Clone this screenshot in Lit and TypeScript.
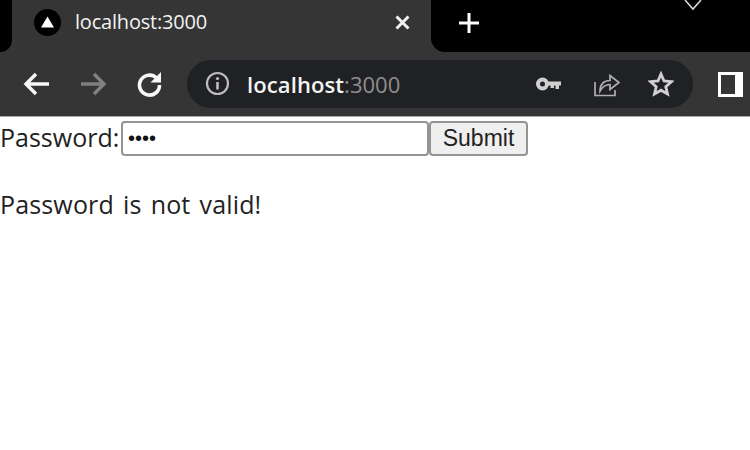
import { LitElement, html, css } from "lit";
import { customElement } from "lit/decorators.js";

@customElement("app-root")
export class AppRoot extends LitElement {
  static styles = css`
    :host { display: block; width: 750px; height: 450px; overflow: hidden; background: #fff; font-family: "Open Sans", "Noto Sans", sans-serif; }
    svg { display: block; flex: none; }
    .strip { display: flex; height: 52px; background: #353535; }
    .corner { width: 12px; background: #000; border-bottom-right-radius: 12px; }
    .tab { width: 419px; display: flex; align-items: center; padding: 0 20px 8px 22px; box-sizing: border-box; color: #f2f2f2; }
    .tab-title { flex: 1; margin-left: 14px; font-size: 20px; letter-spacing: -0.2px; line-height: 44px; }
    .rest { flex: 1; background: #000; border-bottom-left-radius: 14px; display: flex; justify-content: space-between; padding: 0 47px 0 27px; }
    .new { margin-top: 12px; }
    .toolbar { height: 64px; background: #353535; display: flex; align-items: center; border-bottom: 1px solid #a9a9a9; }
    .nav { display: flex; align-items: center; gap: 28px; padding-left: 23px; width: 187px; box-sizing: border-box; }
    .omni { width: 506px; height: 48px; border-radius: 24px; background: #202124; display: flex; align-items: center; padding-left: 18px; box-sizing: border-box; margin-top: -1px; }
    .url { margin-left: 17px; flex: 1; font-size: 22px; letter-spacing: 0.1px; color: #f4f4f4; font-weight: 600; }
    .url span { color: #8f8f8f; font-weight: 400; letter-spacing: 0; }
    .omni-icons { display: flex; align-items: center; gap: 28px; padding-right: 19px; }
    .key { margin-right: 3px; }
    .panel { margin-left: 25px; }
    .page { color: #222; font-size: 25px; }
    form { display: flex; align-items: stretch; height: 35px; margin-top: 4px; line-height: 35px; }
    label { width: 121px; white-space: nowrap; margin-top: -1px; }
    input { width: 308px; height: 35px; box-sizing: border-box; border: 2px solid #949494; border-radius: 4px; padding: 0 5px; font: 20px "Liberation Sans", sans-serif; background: #fff; color: #111; outline: none; margin: 0; }
    button { width: 99px; height: 35px; box-sizing: border-box; border: 2px solid #949494; border-radius: 4px; background: #efefef; font: 23px "Liberation Sans", sans-serif; color: #222; padding: 0; margin: 0; }
    p { margin: 0; padding-top: 31px; line-height: 34px; letter-spacing: 0.15px; word-spacing: 2.5px; }
  `;

  render() {
    return html`
      <div class="strip">
        <div class="corner"></div>
        <div class="tab">
          <svg width="27" height="27" viewBox="0 0 27 27"><circle cx="13.5" cy="13.5" r="13.5" fill="#000"/><path d="M13.5 7.5 20 18.5H7Z" fill="#fff"/></svg>
          <span class="tab-title">localhost:3000</span>
          <svg width="17" height="17" viewBox="0 0 17 17"><path d="M2.5 2.5 14.5 14.5M14.5 2.5 2.5 14.5" stroke="#f0f0f0" stroke-width="3" fill="none"/></svg>
        </div>
        <div class="rest">
          <svg class="new" width="22" height="22" viewBox="0 0 22 22"><path d="M11 1V21M1 11H21" stroke="#fff" stroke-width="3" fill="none"/></svg>
          <svg width="20" height="11" viewBox="0 0 20 11"><path d="M2 0 10 9 18 0" stroke="#ddd" stroke-width="1.5" fill="none"/></svg>
        </div>
      </div>
      <div class="toolbar">
        <div class="nav">
          <svg width="28" height="26" viewBox="0 0 28 26"><path d="M26 13H3M13 3 3 13 13 23" stroke="#f8f8f8" stroke-width="3.4" fill="none"/></svg>
          <svg width="28" height="26" viewBox="0 0 28 26"><path d="M2 13H25M15 3 25 13 15 23" stroke="#808080" stroke-width="3.4" fill="none"/></svg>
          <svg width="28" height="28" viewBox="0 0 28 28"><path d="M21.500 8A10 10 0 1 0 24.500 15" stroke="#f8f8f8" stroke-width="3.6" fill="none"/><path d="M26 2V12.500H15.500Z" fill="#f8f8f8"/></svg>
        </div>
        <div class="omni">
          <svg width="25" height="25" viewBox="0 0 25 25"><circle cx="12.5" cy="12.5" r="10.5" stroke="#bdbdbd" stroke-width="2.2" fill="none"/><path d="M12.5 11V18.5" stroke="#bdbdbd" stroke-width="2.6"/><circle cx="12.5" cy="7.5" r="1.6" fill="#bdbdbd"/></svg>
          <span class="url">localhost<span>:3000</span></span>
          <div class="omni-icons">
            <svg class="key" width="26" height="14" viewBox="0 0 26 14"><circle cx="6.5" cy="7" r="4.5" stroke="#d0d0d0" stroke-width="4" fill="none"/><path d="M11 4.500H25V8.500H23V12H19.500V8.500H18V11H14.500V8.500H11Z" fill="#d0d0d0"/></svg>
            <svg width="27" height="26" viewBox="0 0 27 26"><path d="M2 11V24.500H22V19" stroke="#b0b0b0" stroke-width="1.700" fill="none"/><path d="M7 20C7 13 11 9.500 17 9.500V4.500L26 11.500 17 18.500V13.500C13 13.500 9.500 15.500 7 20Z" stroke="#b0b0b0" stroke-width="1.700" fill="none"/></svg>
            <svg width="26" height="26" viewBox="0 0 26 26"><path d="M13 3 16 10 23.500 10.700 17.800 15.700 19.500 23 13 19.200 6.500 23 8.200 15.700 2.500 10.700 10 10Z" stroke="#d0d0d0" stroke-width="2.800" fill="none"/></svg>
          </div>
        </div>
        <svg class="panel" width="25" height="25" viewBox="0 0 25 25"><rect width="25" height="25" fill="#fff"/><rect x="3" y="3" width="14" height="19" fill="#353535"/></svg>
      </div>
      <div class="page">
        <form>
          <label>Password:</label>
          <input type="password" value="test" />
          <button type="button">Submit</button>
        </form>
        <p>Password is not valid!</p>
      </div>
    `;
  }
}
